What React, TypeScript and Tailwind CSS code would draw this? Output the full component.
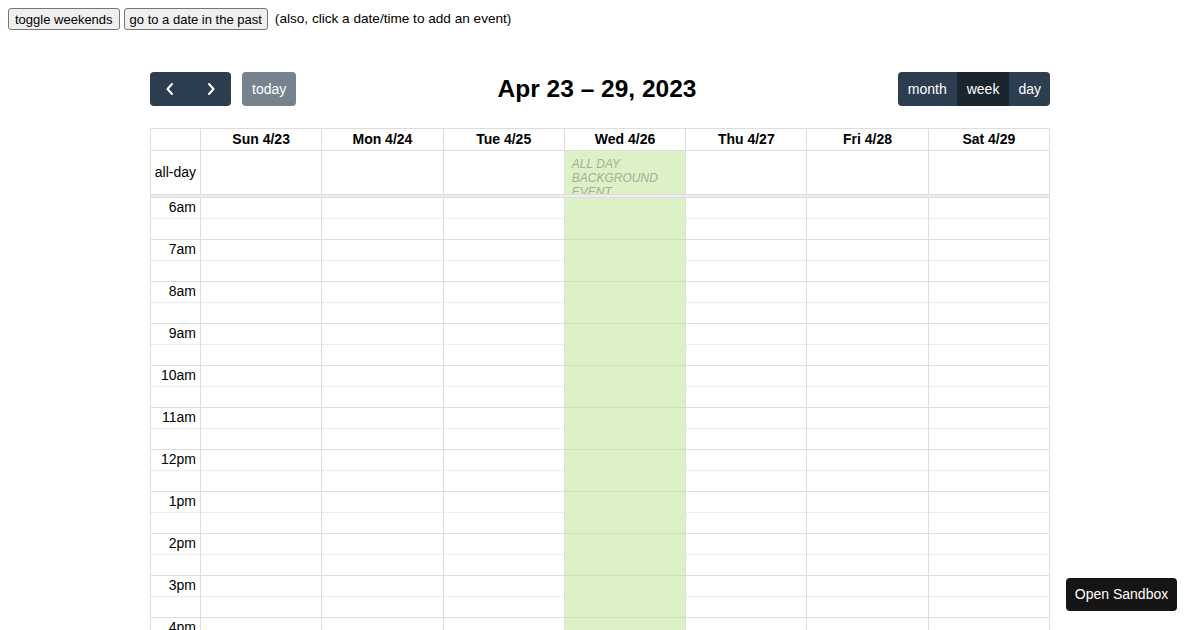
import { Fragment } from "react";

const DAYS = ["Sun 4/23", "Mon 4/24", "Tue 4/25", "Wed 4/26", "Thu 4/27", "Fri 4/28", "Sat 4/29"];
const HOURS = ["6am", "7am", "8am", "9am", "10am", "11am", "12pm", "1pm", "2pm", "3pm", "4pm", "5pm"];
const BG_DAY = 3;

function Chevron({ dir }: { dir: "left" | "right" }) {
  return (
    <svg width="10" height="16" viewBox="0 0 10 16" fill="none" stroke="white" strokeWidth="2" strokeLinecap="round" strokeLinejoin="round">
      {dir === "left" ? <path d="M7 3 L2.5 8 L7 13" /> : <path d="M3 3 L7.5 8 L3 13" />}
    </svg>
  );
}

export default function App() {
  return (
    <div className="relative min-h-[630px] bg-white p-2 text-black font-['Liberation_Sans',Arial,sans-serif]">
      {/* top controls */}
      <div className="flex items-center gap-1 text-[13px]">
        <button className="h-[22px] px-[6px] border border-[#767676] rounded-[3px] bg-[#efefef] leading-none">
          toggle weekends
        </button>
        <button className="h-[22px] px-[5px] border border-[#767676] rounded-[3px] bg-[#efefef] leading-none">
          go to a date in the past
        </button>
        <span className="ml-[3px] text-[13.6px]">(also, click a date/time to add an event)</span>
      </div>

      <div className="w-[900px] mx-auto mt-[42px] text-[14px]">
        {/* toolbar */}
        <div className="flex items-center justify-between mb-[22px]">
          <div className="flex items-center gap-[11px]">
            <div className="flex h-[34px] rounded-[4px] overflow-hidden bg-[#2c3e50]">
              <button className="w-[40px] flex items-center justify-center"><Chevron dir="left" /></button>
              <button className="w-[41px] flex items-center justify-center"><Chevron dir="right" /></button>
            </div>
            <button className="h-[34px] px-[10px] rounded-[4px] bg-[#76828d] text-white text-[14px]">today</button>
          </div>
          <h2 className="text-[24.5px] font-bold leading-none">Apr 23 – 29, 2023</h2>
          <div className="flex h-[34px] rounded-[4px] overflow-hidden bg-[#2c3e50] text-white text-[14px]">
            <button className="px-[10px]">month</button>
            <button className="px-[10px] bg-[#1a252f]">week</button>
            <button className="px-[9px]">day</button>
          </div>
        </div>

        {/* calendar grid */}
        <div className="border-l border-t border-[#ddd] grid grid-cols-[50px_repeat(7,minmax(0,1fr))]">
          <div className="h-[22px] border-r border-b border-[#ddd]" />
          {DAYS.map((d) => (
            <div key={d} className="h-[22px] border-r border-b border-[#ddd] flex items-center justify-center font-bold">
              {d}
            </div>
          ))}

          <div className="h-[44px] border-r border-b border-[#ddd] flex items-center justify-end pr-[4px]">all-day</div>
          {DAYS.map((d, i) => (
            <div
              key={d}
              className={
                i === BG_DAY
                  ? "h-[44px] border-r border-b border-[#ddd] bg-[#ddf1c6] overflow-hidden"
                  : "h-[44px] border-r border-b border-[#ddd]"
              }
            >
              {i === BG_DAY && (
                <div className="mx-[7px] mt-[6px] text-[12px] leading-[14px] italic text-[#a6ad99]">
                  ALL DAY BACKGROUND EVENT
                </div>
              )}
            </div>
          ))}

          <div className="col-span-8 h-[2px] bg-[#eee] border-b border-[#ddd] box-content" />

          {HOURS.map((h) => (
            <Fragment key={h}>
              <div className="h-[21px] border-r border-b border-[#ddd] [border-bottom-style:dotted] flex items-center justify-end pr-[4px] pb-[1px]">
                {h}
              </div>
              {DAYS.map((d, i) => (
                <div
                  key={d}
                  className={
                    i === BG_DAY
                      ? "h-[21px] border-r border-b border-[#ddd] border-b-[#ddf1c6] bg-[#ddf1c6]"
                      : "h-[21px] border-r border-b border-[#ddd] [border-bottom-style:dotted]"
                  }
                />
              ))}
              <div className="h-[21px] border-r border-b border-[#ddd]" />
              {DAYS.map((d, i) => (
                <div
                  key={d}
                  className={
                    i === BG_DAY
                      ? "h-[21px] border-r border-b border-[#ddd] border-b-[#cfe0bb] bg-[#ddf1c6]"
                      : "h-[21px] border-r border-b border-[#ddd]"
                  }
                />
              ))}
            </Fragment>
          ))}
        </div>
      </div>

      <button className="fixed right-[23px] top-[578px] w-[111px] h-[33px] rounded-[4px] bg-[#151515] text-white text-[14px]">
        Open Sandbox
      </button>
    </div>
  );
}
